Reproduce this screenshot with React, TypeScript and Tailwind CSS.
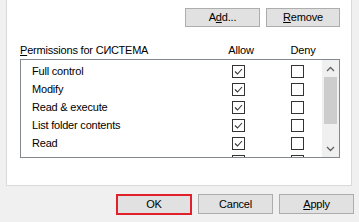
import React from "react";

const rows = [
  { name: "Full control", allow: true, deny: false },
  { name: "Modify", allow: true, deny: false },
  { name: "Read & execute", allow: true, deny: false },
  { name: "List folder contents", allow: true, deny: false },
  { name: "Read", allow: true, deny: false },
  { name: "", allow: true, deny: false },
];

function Box({ checked }: { checked: boolean }) {
  return (
    <div className="w-[13px] h-[13px] border border-[#333333] bg-white flex items-center justify-center">
      {checked && (
        <svg width="11" height="11" viewBox="0 0 11 11">
          <path d="M2 5.5 L4.5 8 L9 3" fill="none" stroke="#333333" strokeWidth="1.1" />
        </svg>
      )}
    </div>
  );
}

function Btn({ children, size, border = "border border-[#adadad]" }: { children: React.ReactNode; size: string; border?: string }) {
  return (
    <div className={"flex items-center justify-center bg-[#e1e1e1] text-black " + size + " " + border}>
      {children}
    </div>
  );
}

export default function App() {
  return (
    <div
      className="w-[359px] h-[222px] bg-[#f0f0f0] overflow-hidden text-[11px] tracking-[-0.2px] text-black"
      style={{ fontFamily: '"Liberation Sans", "Noto Sans", Arial, sans-serif' }}
    >
      <div className="pl-[6px]">
        {/* white property page */}
        <div className="w-[346px] h-[186px] bg-white border-l border-r border-b border-[#d9d9d9]">
          <div className="flex justify-end gap-[6px] pt-[8px] pr-[11px]">
            <Btn size="w-[75px] h-[19px]">
              <span>
                A<span className="underline">d</span>d...
              </span>
            </Btn>
            <Btn size="w-[74px] h-[19px]">
              <span>
                <span className="underline">R</span>emove
              </span>
            </Btn>
          </div>

          <div className="flex items-center pl-[13px] mt-[16px] h-[14px]">
            <div className="w-[196px] whitespace-nowrap">
              <span className="underline">P</span>ermissions for СИСТЕМА
            </div>
            <div className="w-[50px] text-center">Allow</div>
            <div className="w-[17px]" />
            <div className="w-[40px] text-center">Deny</div>
          </div>

          {/* permissions list */}
          <div className="ml-[13px] mt-[2px] w-[320px] h-[99px] border border-[#828790] flex overflow-hidden">
            <div className="flex-1 pt-[2px] overflow-hidden">
              {rows.map((r, i) => (
                <div key={i} className="h-[18px] flex items-center">
                  <div className="w-[211px] pl-[11px] whitespace-nowrap">{r.name}</div>
                  <Box checked={r.allow} />
                  <div className="w-[46px]" />
                  <Box checked={r.deny} />
                </div>
              ))}
            </div>
            {/* scrollbar */}
            <div className="w-[17px] bg-[#f0f0f0] flex flex-col">
              <div className="h-[17px] flex items-center justify-center">
                <svg width="9" height="6" viewBox="0 0 9 6">
                  <path d="M1 5 L4.5 1.5 L8 5" fill="none" stroke="#606060" strokeWidth="1.3" />
                </svg>
              </div>
              <div className="mx-[2px] h-[47px] bg-[#cdcdcd]" />
              <div className="flex-1" />
              <div className="h-[17px] flex items-center justify-center">
                <svg width="9" height="6" viewBox="0 0 9 6">
                  <path d="M1 1 L4.5 4.5 L8 1" fill="none" stroke="#606060" strokeWidth="1.3" />
                </svg>
              </div>
            </div>
          </div>
        </div>
      </div>

      {/* dialog buttons */}
      <div className="flex justify-end gap-[6px] pr-[5px] mt-[8px]">
        <Btn size="w-[76px] h-[21px]" border="border-2 border-[#e0202a]">OK</Btn>
        <Btn size="w-[75px] h-[20px]">Cancel</Btn>
        <Btn size="w-[75px] h-[20px]">
          <span>
            <span className="underline">A</span>pply
          </span>
        </Btn>
      </div>
    </div>
  );
}
